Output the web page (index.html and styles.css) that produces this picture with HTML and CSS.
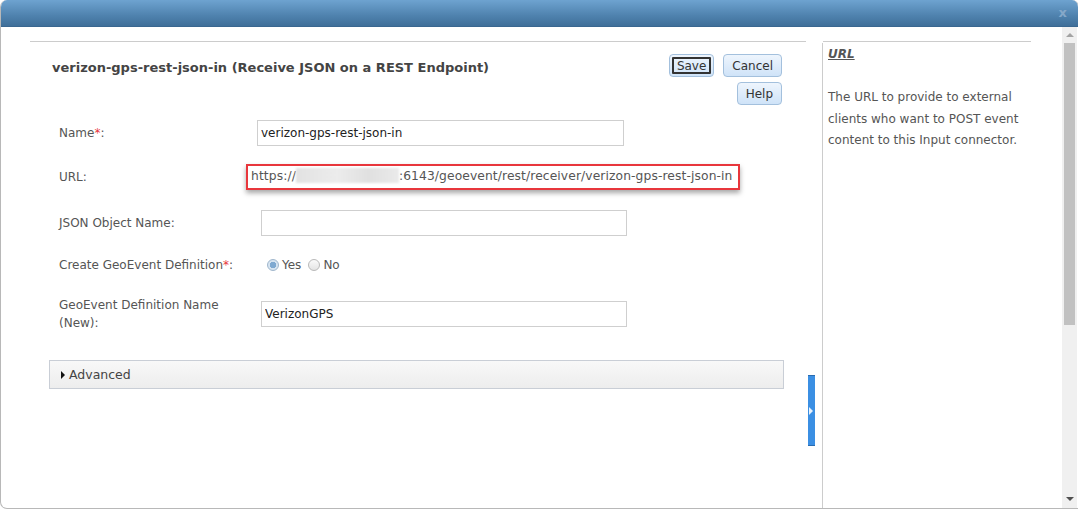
FILE: index.html
```html
<!DOCTYPE html>
<html lang="en">
<head>
    <meta charset="UTF-8">
    <title>verizon-gps-rest-json-in</title>
    <link rel="stylesheet" href="styles.css">
</head>
<body>

    <div class="dialog">
        <div class="titlebar">
            <span class="close">x</span>
        </div>

        <div class="content">
            <div class="main">
                <div class="rule"></div>

                <div class="head">
                    <div class="title">verizon-gps-rest-json-in (Receive JSON on a REST Endpoint)</div>
                    <div class="actions">
                        <div class="btn-row">
                            <button class="btn btn-focus">Save</button>
                            <button class="btn">Cancel</button>
                        </div>
                        <button class="btn">Help</button>
                    </div>
                </div>

                <div class="form">
                    <div class="row">
                        <label class="label">Name<span class="req">*</span>:</label>
                        <input class="field field-name" type="text" value="verizon-gps-rest-json-in">
                    </div>
                    <div class="row">
                        <label class="label">URL:</label>
                        <div class="url-box">https://<span class="redacted"></span>:6143/geoevent/rest/receiver/verizon-gps-rest-json-in</div>
                    </div>
                    <div class="row row-json">
                        <label class="label">JSON Object Name:</label>
                        <input class="field" type="text" value="">
                    </div>
                    <div class="row">
                        <label class="label">Create GeoEvent Definition<span class="req">*</span>:</label>
                        <div class="radios">
                            <span class="radio checked"></span><span class="radio-text">Yes</span>
                            <span class="radio"></span><span class="radio-text">No</span>
                        </div>
                    </div>
                    <div class="row">
                        <label class="label">GeoEvent Definition Name<br>(New):</label>
                        <input class="field" type="text" value="VerizonGPS">
                    </div>
                </div>

                <div class="advanced"><span class="arrow"></span>Advanced</div>
            </div>

            <div class="splitter">
                <div class="splitter-bar"><span class="splitter-arrow"></span></div>
            </div>

            <div class="help">
                <div class="rule"></div>
                <div class="help-body">
                    <div class="help-title">URL</div>
                    <p class="help-text">The URL to provide to external clients who want to POST event content to this Input connector.</p>
                </div>
            </div>

            <div class="scrollbar">
                <span class="scroll-up"></span>
                <div class="scroll-thumb"></div>
                <span class="scroll-down"></span>
            </div>
        </div>
    </div>

</body>
</html>
```

FILE: styles.css
```css
body {
    margin: 0;
    background-color: #ffffff;
    font-family: "DejaVu Sans", Verdana, sans-serif;
    font-size: 12px;
    color: #555;
}
.dialog {
    width: 1077px;
    height: 508px;
    border: 1px solid #b8b8b8;
    border-top: none;
    border-radius: 7px 7px 0 7px;
    overflow: hidden;
    display: flex;
    flex-direction: column;
}
.titlebar {
    height: 26px;
    flex-shrink: 0;
    background: linear-gradient(#6ea3d0, #4f82ae 60%, #3f6f99);
    border-bottom: 1px solid #3a6790;
    display: flex;
    justify-content: flex-end;
    align-items: center;
}
.close {
    color: #85a8c9;
    font-size: 13px;
    font-weight: bold;
    margin-right: 11px;
    margin-top: -2px;
}
.content {
    flex: 1;
    display: flex;
}
.rule {
    height: 1px;
    background-color: #cccccc;
    margin-top: 14px;
}
.main {
    width: 776px;
    margin-left: 29px;
    flex-shrink: 0;
}
.head {
    display: flex;
    justify-content: space-between;
    padding: 12px 24px 0 22px;
}
.title {
    font-weight: bold;
    font-size: 13px;
    color: #444;
    margin-top: 6px;
}
.actions {
    display: flex;
    flex-direction: column;
    align-items: flex-end;
    gap: 5px;
}
.btn-row {
    display: flex;
    gap: 9px;
}
.btn {
    height: 23px;
    padding: 0 8px;
    font-family: "DejaVu Sans", Verdana, sans-serif;
    font-size: 12px;
    color: #333;
    background: linear-gradient(#eef5fd, #cfe3f8);
    border: 1px solid #a3c0dd;
    border-radius: 4px;
}
.btn-focus {
    outline: 2px solid #333;
    outline-offset: -5px;
    padding: 0 7px;
}
.form {
    margin-top: 15px;
    padding-left: 29px;
    display: flex;
    flex-direction: column;
    gap: 18px;
}
.row {
    display: flex;
    align-items: center;
    min-height: 26px;
}
.row-json {
    margin: 2px 0 -2px;
}
.label {
    width: 202px;
    flex-shrink: 0;
    line-height: 18px;
}
.req {
    color: #e8363c;
}
.field {
    width: 366px;
    height: 26px;
    box-sizing: border-box;
    border: 1px solid #cfcfcf;
    padding: 0 3px;
    font-family: "DejaVu Sans", Verdana, sans-serif;
    font-size: 12px;
    color: #222;
}
.field-name {
    margin-left: -4px;
    width: 367px;
}
.url-box {
    margin-left: -15px;
    width: 494px;
    height: 26px;
    box-sizing: border-box;
    border: 2px solid #e8363c;
    box-shadow: 0 3px 5px rgba(0, 0, 0, 0.35);
    padding-left: 3px;
    line-height: 21px;
    white-space: nowrap;
    color: #555;
    font-size: 12.3px;
    letter-spacing: 0.1px;
}
.redacted {
    display: inline-block;
    width: 103px;
    height: 15px;
    vertical-align: -3px;
    background: linear-gradient(90deg, #e2e2e2, #ececec 40%, #e0e0e0 70%, #eaeaea);
    filter: blur(1px);
}
.radios {
    display: flex;
    align-items: center;
    margin-left: 6px;
}
.radio {
    width: 10px;
    height: 10px;
    border-radius: 50%;
    border: 1px solid #b9b9b9;
    background: linear-gradient(#fafafa, #e4e4e4);
}
.radio.checked {
    border-color: #9fb6cc;
    background: radial-gradient(circle, #7fa9d1 0 3px, #d6e4f1 3.5px);
}
.radio-text {
    margin: 0 7px 0 3px;
}
.advanced {
    margin: 28px 22px 0 19px;
    height: 27px;
    border: 1px solid #c9ced6;
    background: linear-gradient(#f8f8f8, #ededed);
    display: flex;
    align-items: center;
    padding-left: 11px;
    color: #444;
    font-size: 12.5px;
}
.arrow {
    width: 0;
    height: 0;
    border-top: 4px solid transparent;
    border-bottom: 4px solid transparent;
    border-left: 4px solid #111;
    margin-right: 4px;
}
.splitter {
    width: 16px;
    flex-shrink: 0;
    display: flex;
    justify-content: flex-start;
}
.splitter-bar {
    margin: 348px 0 0 2px;
    width: 7px;
    height: 69px;
    background-color: #3b8fe3;
    border-top: 1px solid #2a6cb0;
    border-bottom: 1px solid #2a6cb0;
    display: flex;
    align-items: center;
}
.splitter-arrow {
    width: 0;
    height: 0;
    border-top: 4px solid transparent;
    border-bottom: 4px solid transparent;
    border-left: 4px solid #e8f2fc;
    margin-left: 1px;
}
.help {
    width: 209px;
    flex-shrink: 0;
    display: flex;
    flex-direction: column;
}
.help .rule {
    margin-left: 1px;
}
.help-body {
    flex: 1;
    border-left: 1px solid #cccccc;
    margin-top: 1px;
    padding: 4px 0 0 5px;
}
.help-title {
    font-weight: bold;
    font-style: italic;
    text-decoration: underline;
    color: #555;
}
.help-text {
    margin: 26px 0 0;
    line-height: 21.5px;
    color: #555;
    font-size: 12px;
}
.scrollbar {
    width: 15px;
    margin-left: 31px;
    background-color: #f0f0f0;
    display: flex;
    flex-direction: column;
    align-items: center;
}
.scroll-up {
    margin-top: 6px;
    width: 0;
    height: 0;
    border-left: 4px solid transparent;
    border-right: 4px solid transparent;
    border-bottom: 4px solid #a3a3a3;
}
.scroll-thumb {
    margin-top: 6px;
    width: 11px;
    height: 282px;
    background-color: #c1c1c1;
}
.scroll-down {
    margin-top: auto;
    margin-bottom: 7px;
    width: 0;
    height: 0;
    border-left: 4px solid transparent;
    border-right: 4px solid transparent;
    border-top: 4px solid #505050;
}
```
